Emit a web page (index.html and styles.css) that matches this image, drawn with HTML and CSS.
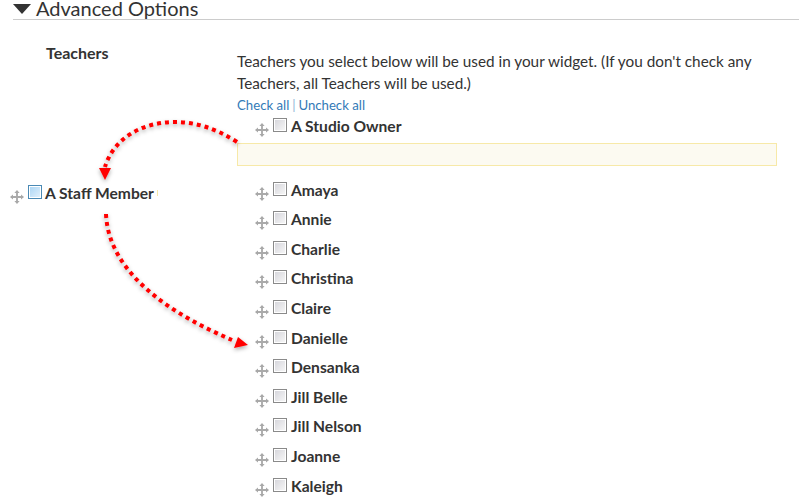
FILE: index.html
```html
<!DOCTYPE html>
<html lang="en">
<head>
    <meta charset="UTF-8">
    <meta name="viewport" content="width=device-width, initial-scale=1.0">
    <title>Advanced Options</title>
    <link rel="stylesheet" href="styles.css">
</head>
<body>
    <svg class="defs" width="0" height="0">
        <symbol id="move" viewBox="0 0 15 15">
            <path d="M7.5 1v13M1 7.5h13" fill="none" stroke="#aaa" stroke-width="2"/>
            <path d="M7.5 0l2.8 3.2h-5.6zM7.5 15l2.8-3.2h-5.6zM0 7.5l3.2-2.8v5.6zM15 7.5l-3.2-2.8v5.6z" fill="#a8a8a8"/>
        </symbol>
    </svg>

    <div class="section-title">
        <span class="triangle"></span>
        <span>Advanced Options</span>
    </div>

    <div class="form-row">
        <div class="form-label">Teachers</div>
        <div class="form-field">
            <p class="help">Teachers you select below will be used in your widget. (If you don't check any Teachers, all Teachers will be used.)</p>
            <div class="links"><a href="#">Check all</a> <span class="sep">|</span> <a href="#">Uncheck all</a></div>

            <div class="teacher first"><svg class="move"><use href="#move"/></svg><span class="check"></span><span>A Studio Owner</span></div>
            <div class="drop-slot"></div>

            <div class="teacher"><svg class="move"><use href="#move"/></svg><span class="check"></span><span>Amaya</span></div>
            <div class="teacher"><svg class="move"><use href="#move"/></svg><span class="check"></span><span>Annie</span></div>
            <div class="teacher"><svg class="move"><use href="#move"/></svg><span class="check"></span><span>Charlie</span></div>
            <div class="teacher"><svg class="move"><use href="#move"/></svg><span class="check"></span><span>Christina</span></div>
            <div class="teacher"><svg class="move"><use href="#move"/></svg><span class="check"></span><span>Claire</span></div>
            <div class="teacher"><svg class="move"><use href="#move"/></svg><span class="check"></span><span>Danielle</span></div>
            <div class="teacher"><svg class="move"><use href="#move"/></svg><span class="check"></span><span>Densanka</span></div>
            <div class="teacher"><svg class="move"><use href="#move"/></svg><span class="check"></span><span>Jill Belle</span></div>
            <div class="teacher"><svg class="move"><use href="#move"/></svg><span class="check"></span><span>Jill Nelson</span></div>
            <div class="teacher"><svg class="move"><use href="#move"/></svg><span class="check"></span><span>Joanne</span></div>
            <div class="teacher"><svg class="move"><use href="#move"/></svg><span class="check"></span><span>Kaleigh</span></div>
        </div>
    </div>

    <!-- item being dragged -->
    <div class="teacher dragged"><svg class="move"><use href="#move"/></svg><span class="check active"></span><span>A Staff Member</span><span class="slot-edge"></span></div>

    <svg class="arrows" width="799" height="500" viewBox="0 0 799 500">
        <defs>
            <filter id="soft" x="-20%" y="-20%" width="140%" height="140%">
                <feDropShadow dx="0" dy="2" stdDeviation="2" flood-color="#000" flood-opacity="0.35"/>
            </filter>
        </defs>
        <g filter="url(#soft)">
            <path class="dots" d="M237 142C215 128 195 122 175 122C140 122 113 140 105 167"/>
            <path class="tip" d="M99 168h12l-6 12z"/>
            <path class="dots" d="M106 214C108 262 150 305 232 340"/>
            <path class="tip" d="M238 337l10 8-14 3z"/>
        </g>
    </svg>
</body>
</html>
```

FILE: styles.css
```css
body {
    font-family: Lato, "Open Sans", sans-serif;
    color: #333;
    background-color: #fff;
    margin: 0;
    height: 500px;
    overflow: hidden;
    position: relative;
}

.defs {
    display: block;
    height: 0;
}

.section-title {
    display: flex;
    align-items: center;
    gap: 5px;
    height: 17px;
    padding-bottom: 2px;
    margin-left: 13px;
    border-bottom: 1px solid #ccc;
    font-size: 20px;
    line-height: 17px;
}

.triangle {
    width: 0;
    height: 0;
    margin-top: 1px;
    border-left: 9.5px solid transparent;
    border-right: 9.5px solid transparent;
    border-top: 10px solid #333;
}

.form-row {
    display: flex;
}

.form-label {
    width: 191px;
    margin-left: 46px;
    padding-top: 23px;
    font-size: 16px;
    line-height: 20px;
    font-weight: bold;
}

.form-field {
    width: 540px;
    padding-top: 31px;
}

.help {
    margin: 0;
    font-size: 15.3px;
    line-height: 21.5px;
}

.links {
    font-size: 13.2px;
    line-height: 20px;
    margin-top: 1px;
}

.links a {
    color: #337ab7;
    text-decoration: none;
}

.sep {
    color: #8fb4d6;
    margin: 0 -0.5px;
}

.teacher {
    display: flex;
    align-items: flex-start;
    height: 29.6px;
    padding-left: 18px;
    font-size: 15.6px;
    font-weight: bold;
    line-height: 18px;
}

.teacher.first {
    height: 26px;
    margin-top: 2px;
}

.move {
    width: 14px;
    height: 14px;
    margin-top: 6px;
    margin-right: 4px;
}

.check {
    box-sizing: border-box;
    width: 14px;
    height: 14px;
    margin-top: 1px;
    margin-right: 4px;
    border: 1px solid #8a8a8a;
    background: linear-gradient(135deg, #d4d4da, #f8f8f8);
    box-shadow: inset 0 0 0 1px #fff;
}

.check.active {
    border-color: #4a8ab5;
    background: linear-gradient(135deg, #a8d4f4, #e4f2fc);
}

.drop-slot {
    box-sizing: border-box;
    height: 23px;
    margin-bottom: 14.6px;
    border: 1px solid #f7e9a8;
    background-color: #fcfaf1;
}

.dragged {
    position: absolute;
    left: -8px;
    top: 184px;
    width: 160px;
}

.dragged .check {
    margin-right: 3px;
}

.slot-edge {
    width: 1px;
    height: 6px;
    margin: 6px 0 0 3px;
    background-color: #f7e9a8;
}

.arrows {
    position: absolute;
    left: 0;
    top: 0;
    pointer-events: none;
}

.dots {
    fill: none;
    stroke: #f00;
    stroke-width: 4;
    stroke-dasharray: 4 4;
}

.tip {
    fill: #f00;
}
```
